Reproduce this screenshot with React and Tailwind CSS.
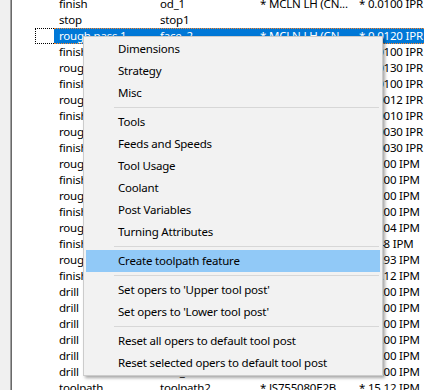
import React from "react";

const rows = [
  ["finish", "od_1", "* MCLN LH (CN...", "* 0.0100 IPR"],
  ["stop", "stop1", "", ""],
  ["rough pass 1", "face_2", "* MCLN LH (CN...", "* 0.0120 IPR"],
  ["finish", "face_1", "* MCLN LH (CN...", "* 0.0100 IPR"],
  ["rough", "od_2", "* MCLN LH (CN...", "* 0.0130 IPR"],
  ["finish", "od_3", "* MCLN LH (CN...", "* 0.0100 IPR"],
  ["rough", "id_1", "* MCLN LH (CN...", "* 0.0012 IPR"],
  ["finish", "id_2", "* MCLN LH (CN...", "* 0.0010 IPR"],
  ["rough", "groove_1", "* MCLN LH (CN...", "* 0.0030 IPR"],
  ["finish", "groove_2", "* MCLN LH (CN...", "* 0.0030 IPR"],
  ["rough", "mill_1", "* JS755080E2B", "* 20.00 IPM"],
  ["finish", "mill_2", "* JS755080E2B", "* 20.00 IPM"],
  ["rough", "mill_3", "* JS755080E2B", "* 20.00 IPM"],
  ["finish", "mill_4", "* JS755080E2B", "* 20.00 IPM"],
  ["rough", "mill_5", "* JS755080E2B", "* 12.04 IPM"],
  ["finish", "mill_6", "* JS755080E2B", "* 7.48 IPM"],
  ["rough", "mill_7", "* JS755080E2B", "* 10.93 IPM"],
  ["finish", "mill_8", "* JS755080E2B", "* 15.12 IPM"],
  ["drill", "drill_1", "* DRILL 0.25", "* 10.00 IPM"],
  ["drill", "drill_2", "* DRILL 0.25", "* 10.00 IPM"],
  ["drill", "drill_3", "* DRILL 0.25", "* 10.00 IPM"],
  ["drill", "drill_4", "* DRILL 0.25", "* 10.00 IPM"],
  ["drill", "drill_5", "* DRILL 0.25", "* 10.00 IPM"],
  ["drill", "drill_6", "* DRILL 0.25", "* 10.00 IPM"],
  ["toolpath", "toolpath2", "* JS755080E2B", "* 15.12 IPM"],
];

const menu = [
  "Dimensions",
  "Strategy",
  "Misc",
  "-",
  "Tools",
  "Feeds and Speeds",
  "Tool Usage",
  "Coolant",
  "Post Variables",
  "Turning Attributes",
  "-",
  "*Create toolpath feature",
  "-",
  "Set opers to 'Upper tool post'",
  "Set opers to 'Lower tool post'",
  "-",
  "Reset all opers to default tool post",
  "Reset selected opers to default tool post",
];

function Row({ r, selected }) {
  if (selected) {
    return (
      <div className="flex h-[16px] whitespace-nowrap leading-[14px]">
        <div className="w-[23px] shrink-0" />
        <div className="w-[19px] shrink-0 border-y border-l border-dotted border-black" />
        <div className="flex flex-1 border-y border-dotted border-[#ff8728] bg-[#0078d7] text-white">
          <div className="w-[101px] shrink-0 overflow-hidden pl-[5px]">{r[0]}</div>
          <div className="w-[100px] shrink-0 overflow-hidden pl-[5px]">{r[1]}</div>
          <div className="w-[99px] shrink-0 overflow-hidden pl-[5px]">{r[2]}</div>
          <div className="flex-1 overflow-hidden pl-[5px]">{r[3]}</div>
        </div>
      </div>
    );
  }
  return (
    <div className="flex h-[16px] whitespace-nowrap leading-[16px] text-black">
      <div className="w-[42px] shrink-0" />
      <div className="w-[101px] shrink-0 overflow-hidden pl-[5px]">{r[0]}</div>
      <div className="w-[100px] shrink-0 overflow-hidden pl-[5px]">{r[1]}</div>
      <div className="w-[99px] shrink-0 overflow-hidden pl-[5px]">{r[2]}</div>
      <div className="flex-1 overflow-hidden pl-[5px]">{r[3]}</div>
    </div>
  );
}

export default function App() {
  return (
    <div
      className="relative flex h-[390px] w-[424px] overflow-hidden bg-white text-[11.5px] tracking-[-0.2px]"
      style={{ fontFamily: '"Noto Sans", "Liberation Sans", sans-serif' }}
    >
      <div className="w-[10px] shrink-0 bg-[#f0f0f0]" />
      <div className="w-px shrink-0 bg-[#a0a0a0]" />
      <div className="w-px shrink-0 bg-[#696969]" />
      <div className="-mt-[4px] flex flex-1 flex-col">
        {rows.map((r, i) => (
          <Row key={i} r={r} selected={i === 2} />
        ))}
      </div>

      <div className="absolute left-[83px] top-[36px] w-[300px] border border-[#cccccc] bg-[#f2f2f2] px-[2px] py-[1px] text-black shadow-[2px_2px_3px_rgba(0,0,0,0.35)]">
        {menu.map((m, i) =>
          m === "-" ? (
            <div key={i} className="flex h-[7px] items-center pl-[28px] pr-[1px]">
              <div className="h-px flex-1 bg-[#d7d7d7]" />
            </div>
          ) : (
            <div
              key={i}
              className={
                "flex h-[22px] items-center whitespace-nowrap pl-[32px] " +
                (m.startsWith("*") ? "bg-[#91c9f7]" : "")
              }
            >
              {m.replace(/^\*/, "")}
            </div>
          )
        )}
      </div>
    </div>
  );
}
